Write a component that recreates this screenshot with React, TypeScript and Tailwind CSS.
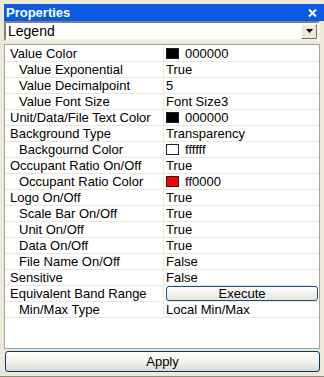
import React from 'react'

type Row = {
  label: string
  sub?: boolean
  value?: string
  swatch?: string
  button?: boolean
}

const ROWS: Row[] = [
  { label: 'Value Color', value: '000000', swatch: '#000000' },
  { label: 'Value Exponential', sub: true, value: 'True' },
  { label: 'Value Decimalpoint', sub: true, value: '5' },
  { label: 'Value Font Size', sub: true, value: 'Font Size3' },
  { label: 'Unit/Data/File Text Color', value: '000000', swatch: '#000000' },
  { label: 'Background Type', value: 'Transparency' },
  { label: 'Backgournd Color', sub: true, value: 'ffffff', swatch: '#ffffff' },
  { label: 'Occupant Ratio On/Off', value: 'True' },
  { label: 'Occupant Ratio Color', sub: true, value: 'ff0000', swatch: '#ff0000' },
  { label: 'Logo On/Off', value: 'True' },
  { label: 'Scale Bar On/Off', sub: true, value: 'True' },
  { label: 'Unit On/Off', sub: true, value: 'True' },
  { label: 'Data On/Off', sub: true, value: 'True' },
  { label: 'File Name On/Off', sub: true, value: 'False' },
  { label: 'Sensitive', value: 'False' },
  { label: 'Equivalent Band Range', button: true },
  { label: 'Min/Max Type', sub: true, value: 'Local Min/Max' },
]

function PropRow({ row }: { row: Row }) {
  return (
    <div className="flex h-[16px] border-b border-[#ece9d8]">
      <div
        className={`w-[159px] shrink-0 overflow-hidden border-r border-[#ece9d8] leading-[16px] whitespace-nowrap ${row.sub ? 'pl-[14px]' : 'pl-[5px]'}`}
      >
        {row.label}
      </div>
      <div className="flex flex-1 items-center pl-[2px] pr-[1px] leading-[16px] whitespace-nowrap">
        {row.button ? (
          <div className="h-[15px] w-full rounded-[3px] border border-[#1f4f7f] bg-gradient-to-b from-white to-[#e6e5de] text-center leading-[13px]">
            Execute
          </div>
        ) : (
          <>
            {row.swatch && (
              <span
                className="mr-[6px] h-[11px] w-[13px] border border-[#222]"
                style={{ background: row.swatch }}
              />
            )}
            {row.value}
          </>
        )}
      </div>
    </div>
  )
}

export default function App() {
  return (
    <div className="flex h-[377px] w-[324px] flex-col border-b border-[#8c8a7e] bg-[#ece9d8] pl-[4px] pt-[4px] font-['Liberation_Sans',Arial,sans-serif] text-[13px] text-black">
      {/* caption */}
      <div className="flex h-[17px] items-center justify-between bg-[#0b5ae4] pl-[2px] pr-[7px] text-[13px] font-bold text-white">
        <span>Properties</span>
        <svg width="9" height="8" viewBox="0 0 9 8">
          <path d="M1 0.5 L8 7.5 M8 0.5 L1 7.5" stroke="white" strokeWidth="2" />
        </svg>
      </div>

      {/* object selector */}
      <div className="mr-[4px] flex h-[20px] items-center border-2 border-t-[#808080] border-l-[#808080] border-b-[#f4f3ee] border-r-[#f4f3ee] bg-white pl-[2px] pr-[1px]">
        <span className="flex-1 text-[14px] leading-[15px]">Legend</span>
        <div className="flex h-[15px] w-[16px] items-center justify-center border border-t-white border-l-white border-b-[#716f64] border-r-[#716f64] bg-[#ece9d8]">
          <svg width="7" height="4" viewBox="0 0 7 4">
            <path d="M0 0 H7 L3.5 4 Z" fill="black" />
          </svg>
        </div>
      </div>

      {/* grid */}
      <div className="mr-[4px] mt-[3px] h-[305px] border border-[#a5a49c] bg-white pt-[1px]">
        {ROWS.map(r => (
          <PropRow key={r.label} row={r} />
        ))}
      </div>

      <div className="mr-[4px] ml-[1px] mt-[2px] h-[21px] rounded-[3px] border border-[#003c74] bg-gradient-to-b from-white via-[#f4f3ee] to-[#dcdbd2] text-center leading-[19px]">
        Apply
      </div>
    </div>
  )
}
